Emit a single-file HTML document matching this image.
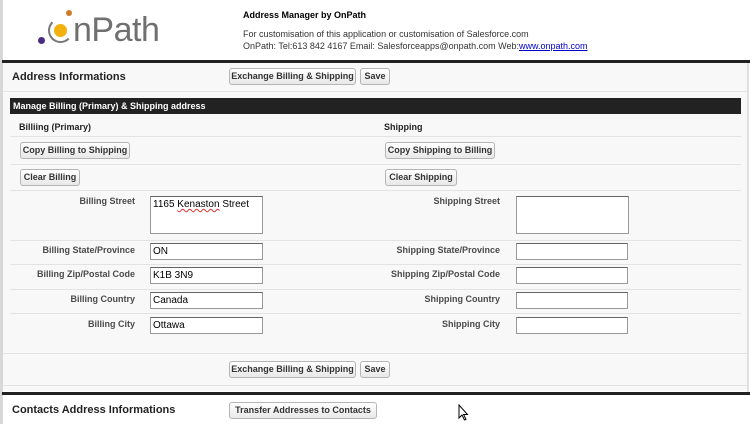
<!DOCTYPE html>
<html><head><style>
*{margin:0;padding:0;box-sizing:border-box}
body{width:750px;height:424px;background:#fff;font-family:"Liberation Sans",Arial,sans-serif;position:relative;overflow:hidden;color:#000}
.a{position:absolute}
.btn{position:absolute;height:17px;border:1px solid #b5b5b5;border-radius:3px;background:linear-gradient(#fff,#e8e8e8);font-size:9px;font-weight:bold;color:#333;text-align:center;line-height:15px;white-space:nowrap}
.hl{position:absolute;height:1px;background:#e3e3e3}
.lab{position:absolute;font-size:9px;font-weight:bold;color:#4a4a4a;text-align:right;white-space:nowrap}
.inp{position:absolute;height:17px;border:1px solid #999;border-top-color:#666;background:#fff;font-size:10px;padding:2px 2px;color:#000;line-height:12px}
</style></head><body>
<div class="a" style="left:0;top:0;width:3px;height:424px;background:#d8d8d8"></div>
<div class="a" style="left:747px;top:62px;width:2px;height:330px;background:#e0e0e0"></div>
<!-- logo -->
<div class="a" style="left:38px;top:37px;width:7px;height:7px;border-radius:50%;background:#4b2a84"></div>
<div class="a" style="left:48px;top:18px;width:25px;height:25px;border-radius:50%;border:2px solid #777;border-top-color:transparent;border-right-color:transparent;transform:rotate(0deg)"></div>
<div class="a" style="left:54px;top:24px;width:13px;height:13px;border-radius:50%;background:#f2b10f"></div>
<div class="a" style="left:66px;top:10px;width:6px;height:6px;border-radius:50%;background:#d07a2a"></div>
<div class="a" style="left:73px;top:10px;font-size:34px;color:#707070;letter-spacing:-0.5px;line-height:40px">nPath</div>
<div class="a" style="left:243px;top:10px;font-size:9px;font-weight:bold">Address Manager by OnPath</div>
<div class="a" style="left:243px;top:29px;font-size:9px;color:#333">For customisation of this application or customisation of Salesforce.com</div>
<div class="a" style="left:243px;top:41px;font-size:9px;color:#333">OnPath: Tel:613 842 4167 Email: Salesforceapps@onpath.com Web:<span style="color:#00c;text-decoration:underline">www.onpath.com</span></div>
<!-- panel -->
<div class="a" style="left:3px;top:62px;width:744px;height:329px;background:#f8f8f8"></div>
<div class="a" style="left:2px;top:60px;width:748px;height:3px;background:#222"></div>
<div class="a" style="left:12px;top:71px;font-size:11px;font-weight:bold;color:#222">Address Informations</div>
<div class="btn" style="left:229px;top:68px;width:127px">Exchange Billing &amp; Shipping</div>
<div class="btn" style="left:360px;top:68px;width:30px">Save</div>
<div class="hl" style="left:3px;top:91px;width:744px"></div>
<div class="a" style="left:10px;top:98px;width:731px;height:16px;background:#222;color:#fff;font-size:9px;font-weight:bold;padding:3px 3px;line-height:10px">Manage Billing (Primary) &amp; Shipping address</div>
<div class="a" style="left:19px;top:122px;font-size:9px;font-weight:bold;color:#222">Billiing (Primary)</div>
<div class="a" style="left:384px;top:122px;font-size:9px;font-weight:bold;color:#222">Shipping</div>
<div class="hl" style="left:10px;top:136px;width:731px"></div>
<div class="btn" style="left:20px;top:142px;width:110px">Copy Billing to Shipping</div>
<div class="btn" style="left:385px;top:142px;width:110px">Copy Shipping to Billing</div>
<div class="hl" style="left:10px;top:164px;width:731px"></div>
<div class="btn" style="left:20px;top:169px;width:60px">Clear Billing</div>
<div class="btn" style="left:385px;top:169px;width:72px">Clear Shipping</div>
<div class="hl" style="left:10px;top:190px;width:731px"></div>

<div class="lab" style="right:615px;top:196px">Billing Street</div>
<div class="inp" style="left:150px;top:196px;width:113px;height:38px">1165 <span style="text-decoration:underline wavy #d33">Kenaston</span> Street</div>
<div class="lab" style="right:250px;top:196px">Shipping Street</div>
<div class="inp" style="left:516px;top:196px;width:113px;height:38px"></div>
<div class="hl" style="left:10px;top:240px;width:731px"></div>

<div class="lab" style="right:615px;top:245px">Billing State/Province</div>
<div class="inp" style="left:150px;top:243px;width:113px">ON</div>
<div class="lab" style="right:250px;top:245px">Shipping State/Province</div>
<div class="inp" style="left:516px;top:243px;width:112px"></div>
<div class="hl" style="left:10px;top:264px;width:731px"></div>

<div class="lab" style="right:615px;top:269px">Billing Zip/Postal Code</div>
<div class="inp" style="left:150px;top:267px;width:113px">K1B 3N9</div>
<div class="lab" style="right:250px;top:269px">Shipping Zip/Postal Code</div>
<div class="inp" style="left:516px;top:267px;width:112px"></div>
<div class="hl" style="left:10px;top:289px;width:731px"></div>

<div class="lab" style="right:615px;top:294px">Billing Country</div>
<div class="inp" style="left:150px;top:292px;width:113px">Canada</div>
<div class="lab" style="right:250px;top:294px">Shipping Country</div>
<div class="inp" style="left:516px;top:292px;width:112px"></div>
<div class="hl" style="left:10px;top:313px;width:731px"></div>

<div class="lab" style="right:615px;top:319px">Billing City</div>
<div class="inp" style="left:150px;top:317px;width:113px">Ottawa</div>
<div class="lab" style="right:250px;top:319px">Shipping City</div>
<div class="inp" style="left:516px;top:317px;width:112px"></div>
<div class="hl" style="left:3px;top:353px;width:744px"></div>

<div class="btn" style="left:229px;top:361px;width:127px">Exchange Billing &amp; Shipping</div>
<div class="btn" style="left:360px;top:361px;width:30px">Save</div>
<div class="hl" style="left:3px;top:385px;width:744px"></div>

<div class="a" style="left:2px;top:392px;width:748px;height:3px;background:#222"></div>
<div class="a" style="left:12px;top:404px;font-size:11px;font-weight:bold;color:#222">Contacts Address Informations</div>
<div class="btn" style="left:229px;top:402px;width:148px">Transfer Addresses to Contacts</div>
<svg class="a" style="left:458px;top:404px" width="11" height="17" viewBox="0 0 11 17"><path d="M1 1 L1 14 L4 11 L6.5 16 L8 15.3 L5.6 10.5 L9.5 10.5 Z" fill="#fff" stroke="#000" stroke-width="1"/></svg>
</body></html>
